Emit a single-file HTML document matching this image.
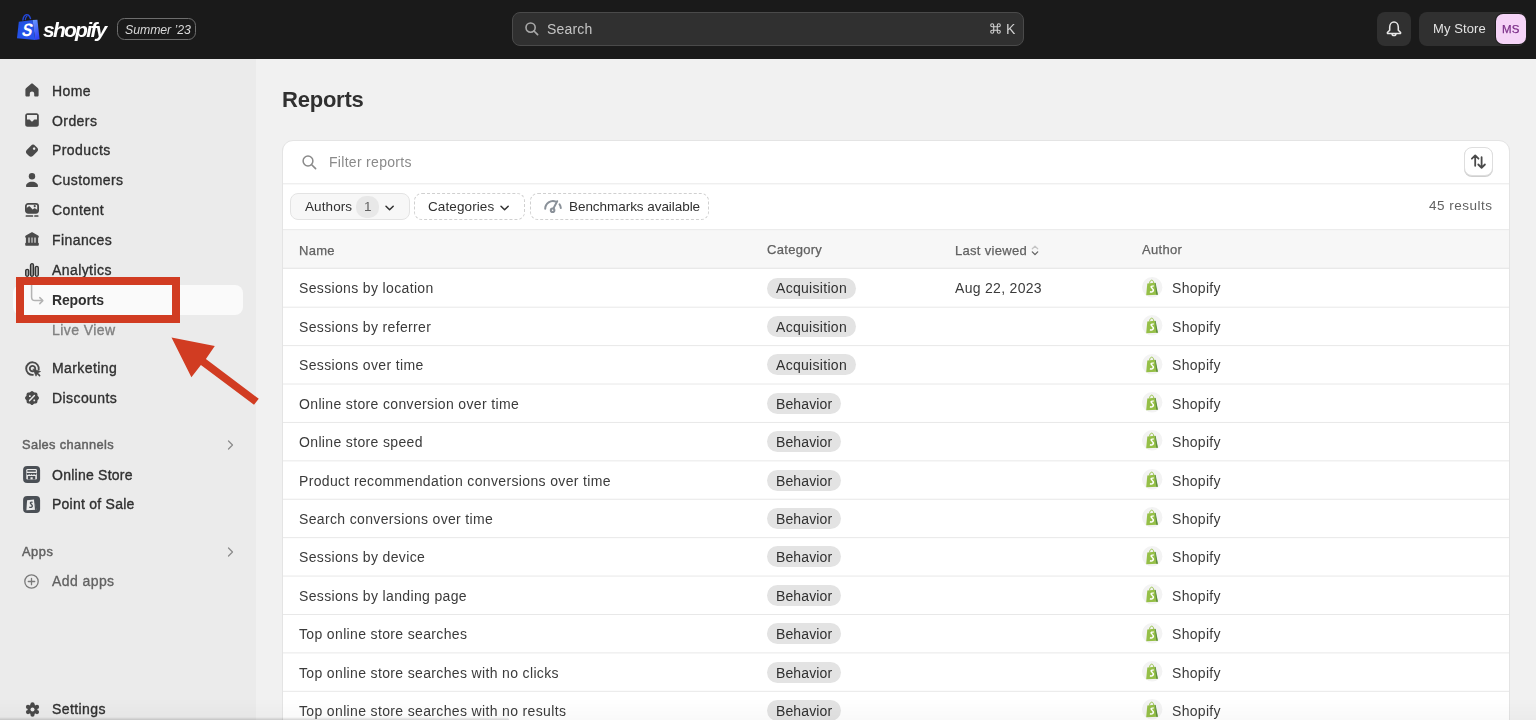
<!DOCTYPE html>
<html><head><meta charset="utf-8"><title>Reports</title>
<style>
*{box-sizing:border-box;margin:0;padding:0}
html,body{width:1536px;height:720px;overflow:hidden;background:#f1f1f1;font-family:"Liberation Sans",sans-serif}
.t{position:absolute;line-height:1;white-space:nowrap;-webkit-font-smoothing:antialiased;will-change:transform}
.a{position:absolute}
svg{position:absolute;overflow:visible}
</style></head><body>
<div class="a" style="left:0;top:0;width:1536px;height:58.7px;background:#1a1a1a"></div><svg style="left:16px;top:14px" width="25" height="27" viewBox="0 0 25 27">
<defs><linearGradient id="bg1" x1="0" y1="0" x2="1" y2="1"><stop offset="0" stop-color="#1f4fe0"/><stop offset="1" stop-color="#2a55f0"/></linearGradient><linearGradient id="bg2" x1="0" y1="0" x2="0.3" y2="1"><stop offset="0" stop-color="#6a9bff"/><stop offset="1" stop-color="#3346f5"/></linearGradient></defs>
<path d="M6.8 6.5 C7.3 3 8.8 0.9 10.6 0.8 C12.4 0.7 14 2.5 14.6 5.2" fill="none" stroke="#2448d8" stroke-width="1.4"/>
<path d="M9.2 6.2 C9.6 3.6 10.4 2.2 11.3 2.1" fill="none" stroke="#2448d8" stroke-width="1.1"/>
<path d="M2.8 7.8 L16.6 5.9 L19.2 26 L1 24.2 Z" fill="url(#bg1)"/>
<path d="M16.6 5.9 L21.4 5.7 L23.6 25.2 L19.2 26 Z" fill="url(#bg2)"/>
<text x="0" y="0" transform="translate(5.0 22) skewX(-14) scale(0.85 1)" font-family="Liberation Sans" font-weight="700" font-size="18" fill="#fff">S</text>
</svg><div class="t" style="top:18.92px;font-size:21px;color:#ffffff;left:43px;font-weight:700;letter-spacing:-1.75px;font-style:italic;">shopify</div>
<div class="a" style="left:117px;top:18.4px;width:79px;height:21.6px;border:1.2px solid #6e6e6e;border-radius:7.5px"></div><div class="t" style="top:23.99px;font-size:12.3px;color:#d9d9d9;left:125px;letter-spacing:-0.05px;font-style:italic;">Summer ’23</div>
<div class="a" style="left:512px;top:11.8px;width:512px;height:34px;background:#303030;border:1px solid #4a4a4a;border-radius:8px"></div><svg style="left:525px;top:22px" width="14" height="14" viewBox="0 0 14 14"><circle cx="5.6" cy="5.6" r="4.6" fill="none" stroke="#a8a8a8" stroke-width="1.6"/><path d="M9 9 L12.6 12.6" stroke="#a8a8a8" stroke-width="1.7" stroke-linecap="round"/></svg><div class="t" style="top:21.85px;font-size:14px;color:#c4c4c4;left:547px;letter-spacing:0.2px;">Search</div>
<svg style="left:990px;top:23px" width="11" height="11" viewBox="0 0 11 11"><path d="M3.7 3.7 H7.3 V7.3 H3.7 Z M3.7 3.7 V2.2 A1.5 1.5 0 1 0 2.2 3.7 H3.7 M7.3 3.7 V2.2 A1.5 1.5 0 1 1 8.8 3.7 H7.3 M7.3 7.3 V8.8 A1.5 1.5 0 1 0 8.8 7.3 H7.3 M3.7 7.3 V8.8 A1.5 1.5 0 1 1 2.2 7.3 H3.7" fill="none" stroke="#cfcfcf" stroke-width="1.1"/></svg><div class="t" style="top:21.85px;font-size:14px;color:#cfcfcf;left:1006px;">K</div>
<div class="a" style="left:1377px;top:12px;width:34px;height:34px;background:#303030;border-radius:8px"></div><svg style="left:1386px;top:21px" width="16" height="17" viewBox="0 0 16 17"><path d="M3.7 9.3 V6.3 C3.7 3.3 5.6 1.1 8 1.1 C10.4 1.1 12.3 3.3 12.3 6.3 V9.3 L14.4 11.3 C14.9 11.8 14.6 12.5 13.9 12.5 H2.1 C1.4 12.5 1.1 11.8 1.6 11.3 Z" fill="none" stroke="#e8e8e8" stroke-width="1.55" stroke-linejoin="round"/><path d="M6.1 12.7 A1.9 1.9 0 0 0 9.9 12.7" fill="none" stroke="#e8e8e8" stroke-width="1.55"/></svg><div class="a" style="left:1419px;top:12px;width:107px;height:34px;background:#303030;border-radius:8px"></div><div class="t" style="top:22.00px;font-size:13px;color:#e3e3e3;left:1432.5px;letter-spacing:0.1px;">My Store</div>
<div class="a" style="left:1495.5px;top:13.8px;width:30px;height:30px;background:#f5d4f7;border-radius:7px;box-shadow:0 0 0 1px #1e1e1e"></div><div class="t" style="top:23.67px;font-size:11.5px;color:#7b2f88;left:1502px;letter-spacing:0.1px;-webkit-text-stroke:0.25px #7b2f88;">MS</div>
<div class="a" style="left:0;top:58.7px;width:256px;height:661.3px;background:#ebebeb"></div><svg style="left:25px;top:83px" width="14" height="14" viewBox="0 0 14 14"><path d="M5.9 0.9 C6.5 0.4 7.5 0.4 8.1 0.9 L12.8 5 C13.3 5.4 13.6 6 13.6 6.6 V12.2 C13.6 13 13 13.6 12.2 13.6 H10 C9.5 13.6 9.2 13.3 9.2 12.8 V10.7 C9.2 9.5 8.2 8.6 7 8.6 C5.8 8.6 4.8 9.5 4.8 10.7 V12.8 C4.8 13.3 4.5 13.6 4 13.6 H1.8 C1 13.6 0.4 13 0.4 12.2 V6.6 C0.4 6 0.7 5.4 1.2 5 Z" fill="#4a4a4a"/></svg><div class="t" style="top:83.65px;font-size:14px;color:#303030;left:51.5px;letter-spacing:0.42px;-webkit-text-stroke:0.35px #303030;">Home</div>
<svg style="left:25px;top:113.4px" width="14" height="14" viewBox="0 0 14 14"><path d="M2.5 0.3 H11.5 C12.8 0.3 13.8 1.3 13.8 2.6 V11.4 C13.8 12.7 12.8 13.7 11.5 13.7 H2.5 C1.2 13.7 0.2 12.7 0.2 11.4 V2.6 C0.2 1.3 1.2 0.3 2.5 0.3 Z M2 2.3 V6.6 H4.4 C5 6.6 5.3 7 5.6 7.5 C5.9 8.2 6.4 8.6 7 8.6 C7.6 8.6 8.1 8.2 8.4 7.5 C8.7 7 9 6.6 9.6 6.6 H12 V2.3 C12 2.1 11.9 2 11.7 2 H2.3 C2.1 2 2 2.1 2 2.3 Z" fill="#4a4a4a" fill-rule="evenodd"/></svg><div class="t" style="top:113.65px;font-size:14px;color:#303030;left:51.5px;letter-spacing:0.42px;-webkit-text-stroke:0.35px #303030;">Orders</div>
<svg style="left:25px;top:143.5px" width="14" height="14" viewBox="0 0 14 14"><g transform="rotate(-45 7 6.7)"><rect x="1.2" y="2.4" width="11.6" height="8.6" rx="3" fill="#4a4a4a"/><circle cx="10" cy="6.7" r="1.25" fill="#ebebeb"/></g></svg><div class="t" style="top:143.45px;font-size:14px;color:#303030;left:51.5px;letter-spacing:0.42px;-webkit-text-stroke:0.35px #303030;">Products</div>
<svg style="left:25px;top:173px" width="14" height="14" viewBox="0 0 14 14"><circle cx="7" cy="3.3" r="3.2" fill="#4a4a4a"/><path d="M7 8.7 C3.6 8.7 1 10.6 1 13 C1 13.6 1.4 14.1 2 14.1 H12 C12.6 14.1 13 13.6 13 13 C13 10.6 10.4 8.7 7 8.7 Z" fill="#4a4a4a"/></svg><div class="t" style="top:173.35px;font-size:14px;color:#303030;left:51.5px;letter-spacing:0.42px;-webkit-text-stroke:0.35px #303030;">Customers</div>
<svg style="left:25px;top:203px" width="14" height="14" viewBox="0 0 14 14"><rect x="0.9" y="0.9" width="12.2" height="8.9" rx="2.2" fill="#ebebeb" stroke="#4a4a4a" stroke-width="1.8"/><path d="M1 5.4 L3.6 3.4 C4 3.1 4.5 3.1 4.9 3.5 L7.6 6.4 L9 5.4 C9.4 5.1 9.9 5.1 10.3 5.4 L13 7.2 V8.2 C13 9 12.4 9.7 11.6 9.7 H2.4 C1.6 9.7 1 9 1 8.2 Z" fill="#4a4a4a"/><circle cx="9.7" cy="3.2" r="1.1" fill="#4a4a4a"/><rect x="0.6" y="12.3" width="7.6" height="1.4" rx="0.5" fill="#4a4a4a"/><rect x="9.2" y="12.3" width="4.3" height="1.4" rx="0.5" fill="#4a4a4a"/></svg><div class="t" style="top:203.35px;font-size:14px;color:#303030;left:51.5px;letter-spacing:0.42px;-webkit-text-stroke:0.35px #303030;">Content</div>
<svg style="left:25px;top:232.2px" width="14" height="14" viewBox="0 0 14 14"><path d="M6.2 0.5 C6.7 0.2 7.3 0.2 7.8 0.5 L13.1 3.4 C13.6 3.7 13.8 4.1 13.8 4.6 V5.4 H0.2 V4.6 C0.2 4.1 0.4 3.7 0.9 3.4 Z" fill="#4a4a4a"/><rect x="0.9" y="5" width="2.5" height="6" fill="#4a4a4a"/><rect x="4.6" y="5" width="1.9" height="6" fill="#4a4a4a"/><rect x="7.5" y="5" width="1.9" height="6" fill="#4a4a4a"/><rect x="10.6" y="5" width="2.5" height="6" fill="#4a4a4a"/><path d="M1 10.8 H13 C13.5 10.8 13.8 11.2 13.8 11.6 V13 C13.8 13.5 13.5 13.8 13 13.8 H1 C0.5 13.8 0.2 13.5 0.2 13 V11.6 C0.2 11.2 0.5 10.8 1 10.8 Z" fill="#4a4a4a"/></svg><div class="t" style="top:233.35px;font-size:14px;color:#303030;left:51.5px;letter-spacing:0.42px;-webkit-text-stroke:0.35px #303030;">Finances</div>
<svg style="left:25px;top:262.5px" width="14" height="14" viewBox="0 0 14 14"><rect x="0.7" y="6.3" width="3" height="7" rx="1.5" fill="#a5a5a5" stroke="#303030" stroke-width="1.3"/><rect x="5.5" y="0.7" width="3" height="12.6" rx="1.5" fill="#9a9a9a" stroke="#303030" stroke-width="1.3"/><rect x="10.3" y="3.3" width="3" height="10" rx="1.5" fill="#b0b0b0" stroke="#303030" stroke-width="1.3"/></svg><div class="t" style="top:263.45px;font-size:14px;color:#303030;left:51.5px;letter-spacing:0.42px;-webkit-text-stroke:0.35px #303030;">Analytics</div>
<div class="a" style="left:12.5px;top:284.8px;width:230.5px;height:30px;background:#fafafa;border-radius:8px"></div><svg style="left:28px;top:284px" width="18" height="20" viewBox="0 0 18 20"><path d="M3.6 0.5 V13 C3.6 15.3 4.8 16.6 7 16.6 H14.5" fill="none" stroke="#b3b3b3" stroke-width="1.5"/><path d="M11.8 13.6 L14.8 16.6 L11.8 19.6" fill="none" stroke="#b3b3b3" stroke-width="1.5" stroke-linecap="round" stroke-linejoin="round"/></svg><div class="t" style="top:292.95px;font-size:14px;color:#303030;left:51.5px;font-weight:700;letter-spacing:-0.15px;">Reports</div>
<div class="t" style="top:323.15px;font-size:14px;color:#808080;left:51.5px;letter-spacing:0.42px;-webkit-text-stroke:0.35px #808080;">Live View</div>
<svg style="left:24.5px;top:360.5px" width="16" height="16" viewBox="0 0 16 16"><path d="M13.7 8.6 A6.3 6.3 0 1 0 7.9 13.9" fill="none" stroke="#4a4a4a" stroke-width="1.9" stroke-linecap="round"/><path d="M10.1 8.3 A2.7 2.7 0 1 0 8.1 10.2" fill="none" stroke="#4a4a4a" stroke-width="1.9" stroke-linecap="round"/><path d="M7.9 7.9 L15.6 10.5 L12.6 11.9 L11 15.2 Z" fill="#4a4a4a" stroke="#4a4a4a" stroke-width="0.6" stroke-linejoin="round"/><path d="M12 12 L14.6 14.6" stroke="#4a4a4a" stroke-width="1.6" stroke-linecap="round"/></svg><div class="t" style="top:361.15px;font-size:14px;color:#303030;left:51.5px;letter-spacing:0.42px;-webkit-text-stroke:0.35px #303030;">Marketing</div>
<svg style="left:23.9px;top:389.7px" width="16" height="16" viewBox="0 0 16 16"><rect x="2.6" y="2.6" width="10.8" height="10.8" rx="1.6" fill="#4a4a4a"/><rect x="2.6" y="2.6" width="10.8" height="10.8" rx="1.6" fill="#4a4a4a" transform="rotate(45 8 8)"/><path d="M5.6 10.6 L10.4 5.6" stroke="#ebebeb" stroke-width="1.5" stroke-linecap="round"/><rect x="5" y="5.2" width="1.7" height="1.7" rx="0.5" fill="#ebebeb"/><rect x="9.4" y="9.5" width="1.7" height="1.7" rx="0.5" fill="#ebebeb"/></svg><div class="t" style="top:391.15px;font-size:14px;color:#303030;left:51.5px;letter-spacing:0.42px;-webkit-text-stroke:0.35px #303030;">Discounts</div>
<div class="t" style="top:438.66px;font-size:12.8px;color:#616161;left:21.8px;letter-spacing:0.37px;-webkit-text-stroke:0.45px #616161;">Sales channels</div>
<svg style="left:227px;top:440px" width="7" height="10" viewBox="0 0 7 10"><path d="M1.5 1 L5.5 5 L1.5 9" fill="none" stroke="#8a8a8a" stroke-width="1.2" stroke-linecap="round" stroke-linejoin="round"/></svg><svg style="left:23.3px;top:465.8px" width="17.2" height="17" viewBox="0 0 17 17"><rect x="0" y="0" width="17" height="17" rx="4" fill="#4a4f55"/><rect x="3.2" y="3.1" width="10.6" height="10.4" rx="1.2" fill="#ebebeb"/><rect x="4.3" y="4.1" width="8.4" height="1.6" fill="#4a4f55"/><path d="M3.6 6.9 H13.4 V7.7 C13.4 8.4 12.9 8.9 12.2 8.9 C11.5 8.9 11 8.4 11 7.8 C11 8.4 10.4 8.9 9.7 8.9 C9 8.9 8.5 8.4 8.5 7.8 C8.5 8.4 7.9 8.9 7.3 8.9 C6.6 8.9 6 8.4 6 7.8 C6 8.4 5.5 8.9 4.8 8.9 C4.1 8.9 3.6 8.4 3.6 7.7 Z" fill="#4a4f55"/><path d="M4.8 10 H12.2 V13.5 H9.6 V11.3 H7.4 V13.5 H4.8 Z" fill="#4a4f55"/></svg><div class="t" style="top:467.75px;font-size:14px;color:#303030;left:51.5px;letter-spacing:0.25px;-webkit-text-stroke:0.35px #303030;">Online Store</div>
<svg style="left:23.3px;top:495.8px" width="17.2" height="17" viewBox="0 0 17 17"><rect x="0" y="0" width="17" height="17" rx="4" fill="#4a4f55"/><path d="M4 4.2 L11 3.5 L13.3 13.8 L3.3 14.2 Z" fill="#ebebeb"/><path d="M11 3.5 L12 3.7 L13.3 13.8 L11.9 13.9 Z" fill="#4a4f55"/><path d="M8.5 5.5 C7.3 5.4 6.4 6.2 6.7 7.4 C7 8.5 8.6 8.8 8.5 10 C8.4 10.9 7.4 11 6.3 10.6 L6 11.8 C7.6 12.4 9.8 12 9.9 10 C10 8.3 8.2 8 8.2 7.2 C8.1 6.7 8.8 6.6 9.5 6.8 L9.8 5.7 Z" fill="#4a4f55"/></svg><div class="t" style="top:497.45px;font-size:14px;color:#303030;left:51.5px;letter-spacing:0.25px;-webkit-text-stroke:0.35px #303030;">Point of Sale</div>
<div class="t" style="top:545.66px;font-size:12.8px;color:#616161;left:21.8px;letter-spacing:0.55px;-webkit-text-stroke:0.45px #616161;">Apps</div>
<svg style="left:227px;top:547px" width="7" height="10" viewBox="0 0 7 10"><path d="M1.5 1 L5.5 5 L1.5 9" fill="none" stroke="#8a8a8a" stroke-width="1.2" stroke-linecap="round" stroke-linejoin="round"/></svg><svg style="left:24.3px;top:573.8px" width="15" height="15" viewBox="0 0 15 15"><circle cx="7.5" cy="7.5" r="6.7" fill="none" stroke="#7a7a7a" stroke-width="1.3"/><path d="M7.5 4.3 V10.7 M4.3 7.5 H10.7" stroke="#7a7a7a" stroke-width="1.3" stroke-linecap="round"/></svg><div class="t" style="top:574.15px;font-size:14px;color:#616161;left:51.5px;letter-spacing:0.42px;-webkit-text-stroke:0.3px #616161;">Add apps</div>
<svg style="left:24.5px;top:701.5px" width="15" height="15" viewBox="0 0 15 15"><g fill="#4a4a4a"><circle cx="7.5" cy="7.5" r="4.9"/><circle cx="7.5" cy="2.3" r="2.1"/><circle cx="7.5" cy="12.7" r="2.1"/><circle cx="3" cy="4.9" r="2.1"/><circle cx="12" cy="4.9" r="2.1"/><circle cx="3" cy="10.1" r="2.1"/><circle cx="12" cy="10.1" r="2.1"/></g><circle cx="7.5" cy="7.5" r="2" fill="#ebebeb"/></svg><div class="t" style="top:701.95px;font-size:14px;color:#303030;left:51.5px;letter-spacing:0.42px;-webkit-text-stroke:0.35px #303030;">Settings</div>
<div class="t" style="top:88.78px;font-size:22px;color:#303030;left:282.3px;font-weight:700;letter-spacing:-0.22px;">Reports</div>
<div class="a" style="left:282px;top:139.9px;width:1228px;height:640px;background:#ffffff;border:1px solid #e4e4e4;border-radius:11px;box-shadow:0 1px 0 #dcdcdc"></div><svg style="left:302px;top:155px" width="15" height="15" viewBox="0 0 15 15"><circle cx="6" cy="6" r="4.9" fill="none" stroke="#8a8a8a" stroke-width="1.5"/><path d="M9.7 9.7 L13.6 13.6" stroke="#8a8a8a" stroke-width="1.6" stroke-linecap="round"/></svg><div class="t" style="top:155.05px;font-size:14px;color:#8a8a8a;left:329.2px;letter-spacing:0.3px;">Filter reports</div>
<div class="a" style="left:1463.5px;top:146.8px;width:29.5px;height:29.6px;background:#fff;border:1px solid #dedede;border-radius:8px;box-shadow:0 1px 0 #cfcfcf"></div><svg style="left:1471px;top:154px" width="16" height="15" viewBox="0 0 16 15"><path d="M4.2 11.8 V1.6 M0.9 4.7 L4.2 1.4 L7.5 4.7" fill="none" stroke="#4a4a4a" stroke-width="1.8" stroke-linecap="round" stroke-linejoin="round"/><path d="M10.6 3.2 V13.6 M7.3 10.5 L10.6 13.8 L13.9 10.5" fill="none" stroke="#4a4a4a" stroke-width="1.8" stroke-linecap="round" stroke-linejoin="round"/></svg><svg style="left:0;top:0" width="1536" height="720" viewBox="0 0 1536 720"><rect x="283" y="183.3" width="1226" height="1" fill="#e8e8e8"/></svg><div class="a" style="left:290.3px;top:193.3px;width:119.5px;height:27px;background:#f7f7f7;border:1px solid #e3e3e3;border-radius:8px"></div><div class="t" style="top:199.67px;font-size:13.5px;color:#303030;left:304.6px;letter-spacing:0.1px;">Authors</div>
<div class="a" style="left:356px;top:196px;width:23px;height:21.6px;background:#e8e8e8;border-radius:10px"></div><div class="t" style="top:199.67px;font-size:13.5px;color:#616161;left:364px;">1</div>
<svg style="left:385.4px;top:204.6px" width="9" height="6" viewBox="0 0 9 6"><path d="M1 1.2 L4.6 4.8 L8.2 1.2" fill="none" stroke="#303030" stroke-width="1.5" stroke-linecap="round" stroke-linejoin="round"/></svg><div class="a" style="left:414.3px;top:193.3px;width:110.3px;height:27px;border:1px dashed #d0d0d0;border-radius:8px"></div><div class="t" style="top:199.67px;font-size:13.5px;color:#303030;left:428.4px;letter-spacing:0.1px;">Categories</div>
<svg style="left:500.4px;top:204.6px" width="9" height="6" viewBox="0 0 9 6"><path d="M1 1.2 L4.6 4.8 L8.2 1.2" fill="none" stroke="#303030" stroke-width="1.5" stroke-linecap="round" stroke-linejoin="round"/></svg><div class="a" style="left:529.6px;top:193.3px;width:179.4px;height:27px;border:1px dashed #d0d0d0;border-radius:8px"></div><svg style="left:543.5px;top:200px" width="18" height="13" viewBox="0 0 18 13"><path d="M1.2 8.8 A7.8 7.8 0 0 1 12 1.6" fill="none" stroke="#8a9199" stroke-width="2" stroke-linecap="round"/><path d="M15.5 4.3 A7.8 7.8 0 0 1 16.8 8" fill="none" stroke="#8a9199" stroke-width="2" stroke-linecap="round"/><path d="M8.8 9.6 L13.2 1.2" stroke="#8a9199" stroke-width="2" stroke-linecap="round"/><circle cx="8.6" cy="10.3" r="1.8" fill="#fff" stroke="#8a9199" stroke-width="2"/></svg><div class="t" style="top:199.67px;font-size:13.5px;color:#303030;left:569.3px;letter-spacing:-0.05px;">Benchmarks available</div>
<div class="t" style="top:199.27px;font-size:13.5px;color:#616161;right:43px;letter-spacing:0.5px;">45 results</div>
<svg style="left:0;top:0" width="1536" height="720" viewBox="0 0 1536 720"><rect x="283" y="229.1" width="1226" height="39.15" fill="#f7f7f7"/><rect x="283" y="229.1" width="1226" height="1" fill="#ebebeb"/><rect x="283" y="267.75" width="1226" height="1" fill="#e4e4e4"/></svg><div class="t" style="top:243.50px;font-size:13px;color:#616161;left:299.1px;letter-spacing:0.3px;-webkit-text-stroke:0.25px #616161;">Name</div>
<div class="t" style="top:243.30px;font-size:13px;color:#616161;left:766.9px;letter-spacing:0.3px;-webkit-text-stroke:0.25px #616161;">Category</div>
<div class="t" style="top:243.50px;font-size:13px;color:#616161;left:954.5px;letter-spacing:0.3px;-webkit-text-stroke:0.25px #616161;">Last viewed</div>
<svg style="left:1031px;top:244.5px" width="8" height="11" viewBox="0 0 8 11"><path d="M1.3 3.8 L4 1.2 L6.7 3.8" fill="none" stroke="#c4c4c4" stroke-width="1.2" stroke-linecap="round" stroke-linejoin="round"/><path d="M1.3 6.9 L4 9.6 L6.7 6.9" fill="none" stroke="#616161" stroke-width="1.3" stroke-linecap="round" stroke-linejoin="round"/></svg><div class="t" style="top:243.40px;font-size:13px;color:#616161;left:1142.3px;letter-spacing:0.3px;-webkit-text-stroke:0.25px #616161;">Author</div>
<div class="t" style="top:281.46px;font-size:14px;color:#3b3b3b;left:299.1px;letter-spacing:0.35px;">Sessions by location</div>
<div class="a" style="left:766.6px;top:277.51px;width:89px;height:21px;background:#e3e3e3;border-radius:10.5px"></div><div class="t" style="top:281.46px;font-size:14px;color:#303030;left:775.6px;letter-spacing:0.3px;">Acquisition</div>
<div class="t" style="top:281.46px;font-size:14px;color:#3b3b3b;left:954.5px;letter-spacing:0.3px;">Aug 22, 2023</div>
<svg style="left:1142.3px;top:276.81px" width="20.4" height="20.4" viewBox="0 0 20 20"><circle cx="10" cy="10" r="10" fill="#f3f3f3"/><path d="M5.2 6.4 L12.6 5.6 L15.6 17.3 L4.1 17.8 Z" fill="#95bf47"/><path d="M12.6 5.6 L13.4 5.8 L15.6 17.3 L14 17.5 Z" fill="#5e8e3e"/><path d="M7.4 6.3 C7.6 4 8.6 3 9.7 3.1 C10.8 3.2 11.3 4.3 11.3 5.8" fill="none" stroke="#95bf47" stroke-width="0.9"/><path d="M10.2 8.3 C9 8.1 8 8.9 8.3 10.1 C8.6 11.3 10.4 11.6 10.3 13 C10.2 14 9.1 14.2 7.9 13.7 L7.6 15.1 C9.3 15.8 11.8 15.3 11.9 13.1 C12 11.2 10 10.9 10 10 C10 9.4 10.7 9.3 11.5 9.5 L11.9 8.4 C11.4 8.3 10.8 8.3 10.2 8.3 Z" fill="#fff"/></svg><div class="t" style="top:281.46px;font-size:14px;color:#3b3b3b;left:1172.4px;letter-spacing:0.3px;">Shopify</div>
<div class="t" style="top:319.87px;font-size:14px;color:#3b3b3b;left:299.1px;letter-spacing:0.35px;">Sessions by referrer</div>
<div class="a" style="left:766.6px;top:315.92px;width:89px;height:21px;background:#e3e3e3;border-radius:10.5px"></div><div class="t" style="top:319.87px;font-size:14px;color:#303030;left:775.6px;letter-spacing:0.3px;">Acquisition</div>
<svg style="left:1142.3px;top:315.22px" width="20.4" height="20.4" viewBox="0 0 20 20"><circle cx="10" cy="10" r="10" fill="#f3f3f3"/><path d="M5.2 6.4 L12.6 5.6 L15.6 17.3 L4.1 17.8 Z" fill="#95bf47"/><path d="M12.6 5.6 L13.4 5.8 L15.6 17.3 L14 17.5 Z" fill="#5e8e3e"/><path d="M7.4 6.3 C7.6 4 8.6 3 9.7 3.1 C10.8 3.2 11.3 4.3 11.3 5.8" fill="none" stroke="#95bf47" stroke-width="0.9"/><path d="M10.2 8.3 C9 8.1 8 8.9 8.3 10.1 C8.6 11.3 10.4 11.6 10.3 13 C10.2 14 9.1 14.2 7.9 13.7 L7.6 15.1 C9.3 15.8 11.8 15.3 11.9 13.1 C12 11.2 10 10.9 10 10 C10 9.4 10.7 9.3 11.5 9.5 L11.9 8.4 C11.4 8.3 10.8 8.3 10.2 8.3 Z" fill="#fff"/></svg><div class="t" style="top:319.87px;font-size:14px;color:#3b3b3b;left:1172.4px;letter-spacing:0.3px;">Shopify</div>
<div class="t" style="top:358.28px;font-size:14px;color:#3b3b3b;left:299.1px;letter-spacing:0.35px;">Sessions over time</div>
<div class="a" style="left:766.6px;top:354.33px;width:89px;height:21px;background:#e3e3e3;border-radius:10.5px"></div><div class="t" style="top:358.28px;font-size:14px;color:#303030;left:775.6px;letter-spacing:0.3px;">Acquisition</div>
<svg style="left:1142.3px;top:353.63px" width="20.4" height="20.4" viewBox="0 0 20 20"><circle cx="10" cy="10" r="10" fill="#f3f3f3"/><path d="M5.2 6.4 L12.6 5.6 L15.6 17.3 L4.1 17.8 Z" fill="#95bf47"/><path d="M12.6 5.6 L13.4 5.8 L15.6 17.3 L14 17.5 Z" fill="#5e8e3e"/><path d="M7.4 6.3 C7.6 4 8.6 3 9.7 3.1 C10.8 3.2 11.3 4.3 11.3 5.8" fill="none" stroke="#95bf47" stroke-width="0.9"/><path d="M10.2 8.3 C9 8.1 8 8.9 8.3 10.1 C8.6 11.3 10.4 11.6 10.3 13 C10.2 14 9.1 14.2 7.9 13.7 L7.6 15.1 C9.3 15.8 11.8 15.3 11.9 13.1 C12 11.2 10 10.9 10 10 C10 9.4 10.7 9.3 11.5 9.5 L11.9 8.4 C11.4 8.3 10.8 8.3 10.2 8.3 Z" fill="#fff"/></svg><div class="t" style="top:358.28px;font-size:14px;color:#3b3b3b;left:1172.4px;letter-spacing:0.3px;">Shopify</div>
<div class="t" style="top:396.69px;font-size:14px;color:#3b3b3b;left:299.1px;letter-spacing:0.35px;">Online store conversion over time</div>
<div class="a" style="left:766.6px;top:392.74px;width:74px;height:21px;background:#e3e3e3;border-radius:10.5px"></div><div class="t" style="top:396.69px;font-size:14px;color:#303030;left:775.6px;letter-spacing:0.12px;">Behavior</div>
<svg style="left:1142.3px;top:392.04px" width="20.4" height="20.4" viewBox="0 0 20 20"><circle cx="10" cy="10" r="10" fill="#f3f3f3"/><path d="M5.2 6.4 L12.6 5.6 L15.6 17.3 L4.1 17.8 Z" fill="#95bf47"/><path d="M12.6 5.6 L13.4 5.8 L15.6 17.3 L14 17.5 Z" fill="#5e8e3e"/><path d="M7.4 6.3 C7.6 4 8.6 3 9.7 3.1 C10.8 3.2 11.3 4.3 11.3 5.8" fill="none" stroke="#95bf47" stroke-width="0.9"/><path d="M10.2 8.3 C9 8.1 8 8.9 8.3 10.1 C8.6 11.3 10.4 11.6 10.3 13 C10.2 14 9.1 14.2 7.9 13.7 L7.6 15.1 C9.3 15.8 11.8 15.3 11.9 13.1 C12 11.2 10 10.9 10 10 C10 9.4 10.7 9.3 11.5 9.5 L11.9 8.4 C11.4 8.3 10.8 8.3 10.2 8.3 Z" fill="#fff"/></svg><div class="t" style="top:396.69px;font-size:14px;color:#3b3b3b;left:1172.4px;letter-spacing:0.3px;">Shopify</div>
<div class="t" style="top:435.10px;font-size:14px;color:#3b3b3b;left:299.1px;letter-spacing:0.35px;">Online store speed</div>
<div class="a" style="left:766.6px;top:431.15px;width:74px;height:21px;background:#e3e3e3;border-radius:10.5px"></div><div class="t" style="top:435.10px;font-size:14px;color:#303030;left:775.6px;letter-spacing:0.12px;">Behavior</div>
<svg style="left:1142.3px;top:430.45px" width="20.4" height="20.4" viewBox="0 0 20 20"><circle cx="10" cy="10" r="10" fill="#f3f3f3"/><path d="M5.2 6.4 L12.6 5.6 L15.6 17.3 L4.1 17.8 Z" fill="#95bf47"/><path d="M12.6 5.6 L13.4 5.8 L15.6 17.3 L14 17.5 Z" fill="#5e8e3e"/><path d="M7.4 6.3 C7.6 4 8.6 3 9.7 3.1 C10.8 3.2 11.3 4.3 11.3 5.8" fill="none" stroke="#95bf47" stroke-width="0.9"/><path d="M10.2 8.3 C9 8.1 8 8.9 8.3 10.1 C8.6 11.3 10.4 11.6 10.3 13 C10.2 14 9.1 14.2 7.9 13.7 L7.6 15.1 C9.3 15.8 11.8 15.3 11.9 13.1 C12 11.2 10 10.9 10 10 C10 9.4 10.7 9.3 11.5 9.5 L11.9 8.4 C11.4 8.3 10.8 8.3 10.2 8.3 Z" fill="#fff"/></svg><div class="t" style="top:435.10px;font-size:14px;color:#3b3b3b;left:1172.4px;letter-spacing:0.3px;">Shopify</div>
<div class="t" style="top:473.51px;font-size:14px;color:#3b3b3b;left:299.1px;letter-spacing:0.35px;">Product recommendation conversions over time</div>
<div class="a" style="left:766.6px;top:469.56px;width:74px;height:21px;background:#e3e3e3;border-radius:10.5px"></div><div class="t" style="top:473.51px;font-size:14px;color:#303030;left:775.6px;letter-spacing:0.12px;">Behavior</div>
<svg style="left:1142.3px;top:468.86px" width="20.4" height="20.4" viewBox="0 0 20 20"><circle cx="10" cy="10" r="10" fill="#f3f3f3"/><path d="M5.2 6.4 L12.6 5.6 L15.6 17.3 L4.1 17.8 Z" fill="#95bf47"/><path d="M12.6 5.6 L13.4 5.8 L15.6 17.3 L14 17.5 Z" fill="#5e8e3e"/><path d="M7.4 6.3 C7.6 4 8.6 3 9.7 3.1 C10.8 3.2 11.3 4.3 11.3 5.8" fill="none" stroke="#95bf47" stroke-width="0.9"/><path d="M10.2 8.3 C9 8.1 8 8.9 8.3 10.1 C8.6 11.3 10.4 11.6 10.3 13 C10.2 14 9.1 14.2 7.9 13.7 L7.6 15.1 C9.3 15.8 11.8 15.3 11.9 13.1 C12 11.2 10 10.9 10 10 C10 9.4 10.7 9.3 11.5 9.5 L11.9 8.4 C11.4 8.3 10.8 8.3 10.2 8.3 Z" fill="#fff"/></svg><div class="t" style="top:473.51px;font-size:14px;color:#3b3b3b;left:1172.4px;letter-spacing:0.3px;">Shopify</div>
<div class="t" style="top:511.92px;font-size:14px;color:#3b3b3b;left:299.1px;letter-spacing:0.35px;">Search conversions over time</div>
<div class="a" style="left:766.6px;top:507.97px;width:74px;height:21px;background:#e3e3e3;border-radius:10.5px"></div><div class="t" style="top:511.92px;font-size:14px;color:#303030;left:775.6px;letter-spacing:0.12px;">Behavior</div>
<svg style="left:1142.3px;top:507.27px" width="20.4" height="20.4" viewBox="0 0 20 20"><circle cx="10" cy="10" r="10" fill="#f3f3f3"/><path d="M5.2 6.4 L12.6 5.6 L15.6 17.3 L4.1 17.8 Z" fill="#95bf47"/><path d="M12.6 5.6 L13.4 5.8 L15.6 17.3 L14 17.5 Z" fill="#5e8e3e"/><path d="M7.4 6.3 C7.6 4 8.6 3 9.7 3.1 C10.8 3.2 11.3 4.3 11.3 5.8" fill="none" stroke="#95bf47" stroke-width="0.9"/><path d="M10.2 8.3 C9 8.1 8 8.9 8.3 10.1 C8.6 11.3 10.4 11.6 10.3 13 C10.2 14 9.1 14.2 7.9 13.7 L7.6 15.1 C9.3 15.8 11.8 15.3 11.9 13.1 C12 11.2 10 10.9 10 10 C10 9.4 10.7 9.3 11.5 9.5 L11.9 8.4 C11.4 8.3 10.8 8.3 10.2 8.3 Z" fill="#fff"/></svg><div class="t" style="top:511.92px;font-size:14px;color:#3b3b3b;left:1172.4px;letter-spacing:0.3px;">Shopify</div>
<div class="t" style="top:550.33px;font-size:14px;color:#3b3b3b;left:299.1px;letter-spacing:0.35px;">Sessions by device</div>
<div class="a" style="left:766.6px;top:546.38px;width:74px;height:21px;background:#e3e3e3;border-radius:10.5px"></div><div class="t" style="top:550.33px;font-size:14px;color:#303030;left:775.6px;letter-spacing:0.12px;">Behavior</div>
<svg style="left:1142.3px;top:545.68px" width="20.4" height="20.4" viewBox="0 0 20 20"><circle cx="10" cy="10" r="10" fill="#f3f3f3"/><path d="M5.2 6.4 L12.6 5.6 L15.6 17.3 L4.1 17.8 Z" fill="#95bf47"/><path d="M12.6 5.6 L13.4 5.8 L15.6 17.3 L14 17.5 Z" fill="#5e8e3e"/><path d="M7.4 6.3 C7.6 4 8.6 3 9.7 3.1 C10.8 3.2 11.3 4.3 11.3 5.8" fill="none" stroke="#95bf47" stroke-width="0.9"/><path d="M10.2 8.3 C9 8.1 8 8.9 8.3 10.1 C8.6 11.3 10.4 11.6 10.3 13 C10.2 14 9.1 14.2 7.9 13.7 L7.6 15.1 C9.3 15.8 11.8 15.3 11.9 13.1 C12 11.2 10 10.9 10 10 C10 9.4 10.7 9.3 11.5 9.5 L11.9 8.4 C11.4 8.3 10.8 8.3 10.2 8.3 Z" fill="#fff"/></svg><div class="t" style="top:550.33px;font-size:14px;color:#3b3b3b;left:1172.4px;letter-spacing:0.3px;">Shopify</div>
<div class="t" style="top:588.74px;font-size:14px;color:#3b3b3b;left:299.1px;letter-spacing:0.35px;">Sessions by landing page</div>
<div class="a" style="left:766.6px;top:584.79px;width:74px;height:21px;background:#e3e3e3;border-radius:10.5px"></div><div class="t" style="top:588.74px;font-size:14px;color:#303030;left:775.6px;letter-spacing:0.12px;">Behavior</div>
<svg style="left:1142.3px;top:584.09px" width="20.4" height="20.4" viewBox="0 0 20 20"><circle cx="10" cy="10" r="10" fill="#f3f3f3"/><path d="M5.2 6.4 L12.6 5.6 L15.6 17.3 L4.1 17.8 Z" fill="#95bf47"/><path d="M12.6 5.6 L13.4 5.8 L15.6 17.3 L14 17.5 Z" fill="#5e8e3e"/><path d="M7.4 6.3 C7.6 4 8.6 3 9.7 3.1 C10.8 3.2 11.3 4.3 11.3 5.8" fill="none" stroke="#95bf47" stroke-width="0.9"/><path d="M10.2 8.3 C9 8.1 8 8.9 8.3 10.1 C8.6 11.3 10.4 11.6 10.3 13 C10.2 14 9.1 14.2 7.9 13.7 L7.6 15.1 C9.3 15.8 11.8 15.3 11.9 13.1 C12 11.2 10 10.9 10 10 C10 9.4 10.7 9.3 11.5 9.5 L11.9 8.4 C11.4 8.3 10.8 8.3 10.2 8.3 Z" fill="#fff"/></svg><div class="t" style="top:588.74px;font-size:14px;color:#3b3b3b;left:1172.4px;letter-spacing:0.3px;">Shopify</div>
<div class="t" style="top:627.15px;font-size:14px;color:#3b3b3b;left:299.1px;letter-spacing:0.35px;">Top online store searches</div>
<div class="a" style="left:766.6px;top:623.20px;width:74px;height:21px;background:#e3e3e3;border-radius:10.5px"></div><div class="t" style="top:627.15px;font-size:14px;color:#303030;left:775.6px;letter-spacing:0.12px;">Behavior</div>
<svg style="left:1142.3px;top:622.50px" width="20.4" height="20.4" viewBox="0 0 20 20"><circle cx="10" cy="10" r="10" fill="#f3f3f3"/><path d="M5.2 6.4 L12.6 5.6 L15.6 17.3 L4.1 17.8 Z" fill="#95bf47"/><path d="M12.6 5.6 L13.4 5.8 L15.6 17.3 L14 17.5 Z" fill="#5e8e3e"/><path d="M7.4 6.3 C7.6 4 8.6 3 9.7 3.1 C10.8 3.2 11.3 4.3 11.3 5.8" fill="none" stroke="#95bf47" stroke-width="0.9"/><path d="M10.2 8.3 C9 8.1 8 8.9 8.3 10.1 C8.6 11.3 10.4 11.6 10.3 13 C10.2 14 9.1 14.2 7.9 13.7 L7.6 15.1 C9.3 15.8 11.8 15.3 11.9 13.1 C12 11.2 10 10.9 10 10 C10 9.4 10.7 9.3 11.5 9.5 L11.9 8.4 C11.4 8.3 10.8 8.3 10.2 8.3 Z" fill="#fff"/></svg><div class="t" style="top:627.15px;font-size:14px;color:#3b3b3b;left:1172.4px;letter-spacing:0.3px;">Shopify</div>
<div class="t" style="top:665.56px;font-size:14px;color:#3b3b3b;left:299.1px;letter-spacing:0.35px;">Top online store searches with no clicks</div>
<div class="a" style="left:766.6px;top:661.61px;width:74px;height:21px;background:#e3e3e3;border-radius:10.5px"></div><div class="t" style="top:665.56px;font-size:14px;color:#303030;left:775.6px;letter-spacing:0.12px;">Behavior</div>
<svg style="left:1142.3px;top:660.91px" width="20.4" height="20.4" viewBox="0 0 20 20"><circle cx="10" cy="10" r="10" fill="#f3f3f3"/><path d="M5.2 6.4 L12.6 5.6 L15.6 17.3 L4.1 17.8 Z" fill="#95bf47"/><path d="M12.6 5.6 L13.4 5.8 L15.6 17.3 L14 17.5 Z" fill="#5e8e3e"/><path d="M7.4 6.3 C7.6 4 8.6 3 9.7 3.1 C10.8 3.2 11.3 4.3 11.3 5.8" fill="none" stroke="#95bf47" stroke-width="0.9"/><path d="M10.2 8.3 C9 8.1 8 8.9 8.3 10.1 C8.6 11.3 10.4 11.6 10.3 13 C10.2 14 9.1 14.2 7.9 13.7 L7.6 15.1 C9.3 15.8 11.8 15.3 11.9 13.1 C12 11.2 10 10.9 10 10 C10 9.4 10.7 9.3 11.5 9.5 L11.9 8.4 C11.4 8.3 10.8 8.3 10.2 8.3 Z" fill="#fff"/></svg><div class="t" style="top:665.56px;font-size:14px;color:#3b3b3b;left:1172.4px;letter-spacing:0.3px;">Shopify</div>
<div class="t" style="top:703.97px;font-size:14px;color:#3b3b3b;left:299.1px;letter-spacing:0.35px;">Top online store searches with no results</div>
<div class="a" style="left:766.6px;top:700.02px;width:74px;height:21px;background:#e3e3e3;border-radius:10.5px"></div><div class="t" style="top:703.97px;font-size:14px;color:#303030;left:775.6px;letter-spacing:0.12px;">Behavior</div>
<svg style="left:1142.3px;top:699.32px" width="20.4" height="20.4" viewBox="0 0 20 20"><circle cx="10" cy="10" r="10" fill="#f3f3f3"/><path d="M5.2 6.4 L12.6 5.6 L15.6 17.3 L4.1 17.8 Z" fill="#95bf47"/><path d="M12.6 5.6 L13.4 5.8 L15.6 17.3 L14 17.5 Z" fill="#5e8e3e"/><path d="M7.4 6.3 C7.6 4 8.6 3 9.7 3.1 C10.8 3.2 11.3 4.3 11.3 5.8" fill="none" stroke="#95bf47" stroke-width="0.9"/><path d="M10.2 8.3 C9 8.1 8 8.9 8.3 10.1 C8.6 11.3 10.4 11.6 10.3 13 C10.2 14 9.1 14.2 7.9 13.7 L7.6 15.1 C9.3 15.8 11.8 15.3 11.9 13.1 C12 11.2 10 10.9 10 10 C10 9.4 10.7 9.3 11.5 9.5 L11.9 8.4 C11.4 8.3 10.8 8.3 10.2 8.3 Z" fill="#fff"/></svg><div class="t" style="top:703.97px;font-size:14px;color:#3b3b3b;left:1172.4px;letter-spacing:0.3px;">Shopify</div>
<svg style="left:0;top:0" width="1536" height="720" viewBox="0 0 1536 720"><rect x="283" y="306.70" width="1226" height="1" fill="#e8e8e8"/><rect x="283" y="345.11" width="1226" height="1" fill="#e8e8e8"/><rect x="283" y="383.52" width="1226" height="1" fill="#e8e8e8"/><rect x="283" y="421.93" width="1226" height="1" fill="#e8e8e8"/><rect x="283" y="460.34" width="1226" height="1" fill="#e8e8e8"/><rect x="283" y="498.75" width="1226" height="1" fill="#e8e8e8"/><rect x="283" y="537.16" width="1226" height="1" fill="#e8e8e8"/><rect x="283" y="575.57" width="1226" height="1" fill="#e8e8e8"/><rect x="283" y="613.98" width="1226" height="1" fill="#e8e8e8"/><rect x="283" y="652.39" width="1226" height="1" fill="#e8e8e8"/><rect x="283" y="690.80" width="1226" height="1" fill="#e8e8e8"/></svg><div class="a" style="left:0;top:698px;width:1536px;height:22px;background:linear-gradient(to bottom, rgba(0,0,0,0), rgba(0,0,0,0.025))"></div><div class="a" style="left:0;top:716.5px;width:509px;height:4px;border-top-right-radius:4px 3px;background:linear-gradient(to bottom, rgba(0,0,0,0), rgba(0,0,0,0.2))"></div><div class="a" style="left:16.25px;top:277px;width:163.75px;height:46px;border:8px solid #d13c22"></div><svg style="left:0;top:0" width="1536" height="720" viewBox="0 0 1536 720"><path d="M171.5 337.6 L214.8 346 L205.9 358.9 L258.75 398.75 L254 404.8 L200.9 365.1 L191.4 377.2 Z" fill="#d13c22"/></svg></body></html>
